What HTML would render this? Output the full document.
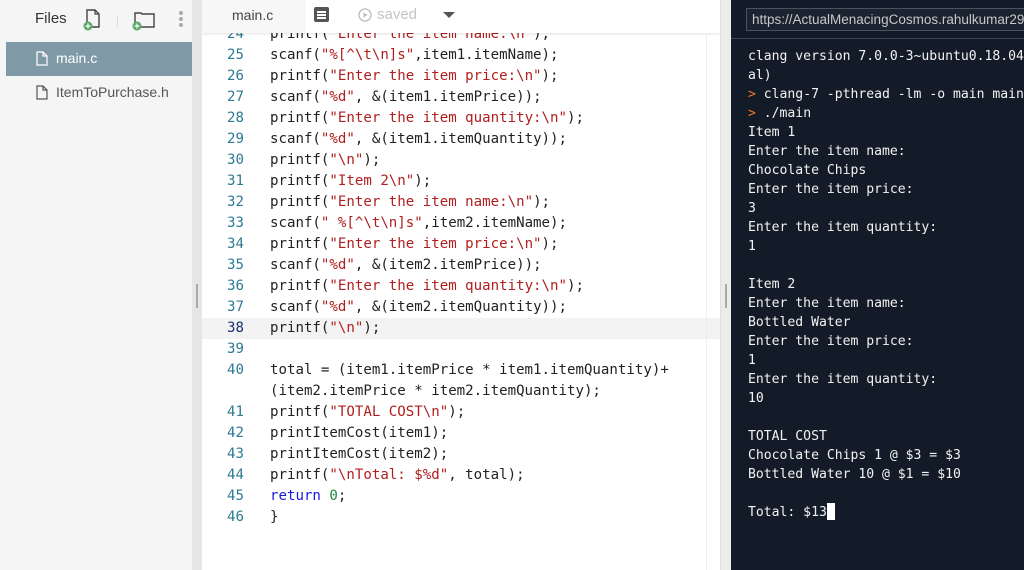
<!DOCTYPE html>
<html><head><style>
*{margin:0;padding:0;box-sizing:border-box}
body{width:1024px;height:570px;overflow:hidden;position:relative;background:#fff;font-family:"Liberation Sans",sans-serif}
#side{position:absolute;left:0;top:0;width:192px;height:570px;background:#f5f5f5}
#gut{position:absolute;left:192px;top:0;width:10px;height:570px;background:#e6e6e6}
#ed{position:absolute;left:202px;top:0;width:518px;height:570px;background:#fff;overflow:hidden}
#div{position:absolute;left:720px;top:0;width:11px;height:570px;background:#ececec;border-left:1px solid #e0e0e0}
#term{position:absolute;left:731px;top:0;width:293px;height:570px;background:#141b28;overflow:hidden}
.code{position:absolute;left:0;top:24px;width:518px;font-family:"DejaVu Sans Mono",monospace;font-size:14.1px;line-height:21px;color:#222;white-space:pre}
.ln{display:inline-block;width:42px;text-align:right;color:#2d7a94;margin-right:26px}
.s{color:#b01e1e}.k{color:#1a1adb}.n{color:#1a8a3a}
.act{background:#f3f3f3}
.act .ln{color:#1c2f73}
#hdr{position:absolute;left:0;top:0;width:518px;height:33px;background:#fff;box-shadow:0 1px 3px rgba(0,0,0,.12)}
.tcode{position:absolute;left:17px;top:46.5px;font-family:"DejaVu Sans Mono",monospace;font-size:13.1px;line-height:19px;color:#f2f2f2;white-space:pre}
.ar{color:#f0792a}
</style></head><body>
<div id="side">
 <div style="position:absolute;left:35px;top:10px;font-size:15px;color:#333">Files</div>
 <svg style="position:absolute;left:82px;top:8px" width="22" height="24"><path d="M5 2h8l4 4v13H5z" fill="none" stroke="#444" stroke-width="1.4"/><path d="M13 2v4h4" fill="none" stroke="#444" stroke-width="1.2"/><circle cx="6" cy="18" r="4.5" fill="#5aa86a"/><path d="M6 15.5v5M3.5 18h5" stroke="#fff" stroke-width="1.2"/></svg>
 <div style="position:absolute;left:117px;top:15px;width:1px;height:12px;background:#ddd"></div>
 <svg style="position:absolute;left:130px;top:8px" width="28" height="24"><path d="M5 5h6l1 1h12v13H5z" fill="none" stroke="#444" stroke-width="1.4"/><circle cx="7" cy="18" r="4.5" fill="#5aa86a"/><path d="M7 15.5v5M4.5 18h5" stroke="#fff" stroke-width="1.2"/></svg>
 <div style="position:absolute;left:179px;top:11px;width:4px;height:4px;border-radius:2px;background:#aaa;box-shadow:0 6px 0 #aaa,0 12px 0 #aaa"></div>
 <div style="position:absolute;left:6px;top:42px;width:186px;height:34px;background:#7f99a6"></div>
 <svg style="position:absolute;left:36px;top:51px" width="12" height="15"><path d="M1 1h6l4 4v9H1z M7 1v4h4" fill="none" stroke="#fff" stroke-width="1.2"/></svg>
 <div style="position:absolute;left:56px;top:50px;font-size:14px;color:#fff">main.c</div>
 <svg style="position:absolute;left:36px;top:85px" width="12" height="15"><path d="M1 1h6l4 4v9H1z M7 1v4h4" fill="none" stroke="#555" stroke-width="1.2"/></svg>
 <div style="position:absolute;left:56px;top:84px;font-size:14px;color:#555">ItemToPurchase.h</div>
</div>
<div id="gut"><div style="position:absolute;left:4px;top:284px;width:2px;height:24px;background:#aaa"></div></div>
<div id="ed">
<div class="code"><div><span class="ln">24</span>printf(<span class="s">"Enter the item name:\n"</span>);</div><div><span class="ln">25</span>scanf(<span class="s">"%[^\t\n]s"</span>,item1.itemName);</div><div><span class="ln">26</span>printf(<span class="s">"Enter the item price:\n"</span>);</div><div><span class="ln">27</span>scanf(<span class="s">"%d"</span>, &amp;(item1.itemPrice));</div><div><span class="ln">28</span>printf(<span class="s">"Enter the item quantity:\n"</span>);</div><div><span class="ln">29</span>scanf(<span class="s">"%d"</span>, &amp;(item1.itemQuantity));</div><div><span class="ln">30</span>printf(<span class="s">"\n"</span>);</div><div><span class="ln">31</span>printf(<span class="s">"Item 2\n"</span>);</div><div><span class="ln">32</span>printf(<span class="s">"Enter the item name:\n"</span>);</div><div><span class="ln">33</span>scanf(<span class="s">" %[^\t\n]s"</span>,item2.itemName);</div><div><span class="ln">34</span>printf(<span class="s">"Enter the item price:\n"</span>);</div><div><span class="ln">35</span>scanf(<span class="s">"%d"</span>, &amp;(item2.itemPrice));</div><div><span class="ln">36</span>printf(<span class="s">"Enter the item quantity:\n"</span>);</div><div><span class="ln">37</span>scanf(<span class="s">"%d"</span>, &amp;(item2.itemQuantity));</div><div class="act"><span class="ln">38</span>printf(<span class="s">"\n"</span>);</div><div><span class="ln">39</span></div><div><span class="ln">40</span>total = (item1.itemPrice * item1.itemQuantity)+</div><div><span class="ln"></span>(item2.itemPrice * item2.itemQuantity);</div><div><span class="ln">41</span>printf(<span class="s">"TOTAL COST\n"</span>);</div><div><span class="ln">42</span>printItemCost(item1);</div><div><span class="ln">43</span>printItemCost(item2);</div><div><span class="ln">44</span>printf(<span class="s">"\nTotal: $%d"</span>, total);</div><div><span class="ln">45</span><span class="k">return</span> <span class="n">0</span>;</div><div><span class="ln">46</span>}</div></div>
<div id="hdr">
 <div style="position:absolute;left:0;top:0;width:104px;height:33px;background:#f7f7f7"></div>
 <div style="position:absolute;left:30px;top:7px;font-size:14px;color:#444">main.c</div>
 <div style="position:absolute;left:112px;top:7px;width:15px;height:15px;border-radius:2px;background:#555"><div style="margin:4px 3px;height:1.5px;background:#fff;box-shadow:0 3px 0 #fff,0 6px 0 #fff;width:9px"></div></div>
 <svg style="position:absolute;left:155px;top:7px" width="16" height="16"><circle cx="8" cy="8" r="6" fill="none" stroke="#bbb" stroke-width="1.3"/><path d="M6.5 5.5l4 2.5-4 2.5z" fill="#bbb"/></svg>
 <div style="position:absolute;left:175px;top:6px;font-size:15px;color:#c4c4c4">saved</div>
 <svg style="position:absolute;left:240px;top:10px" width="14" height="10"><path d="M1 2h12l-6 6z" fill="#555"/></svg>
</div>
<div style="position:absolute;left:504px;top:33px;width:1px;height:537px;background:#eee"></div>
</div>
<div id="div"><div style="position:absolute;left:4px;top:284px;width:2px;height:24px;background:#aaa"></div></div>
<div id="term">
 <div style="position:absolute;left:15px;top:8px;width:300px;height:23px;border:1px solid #4a5160;background:#1b2230;color:#c8c8c8;font-size:13.5px;padding:3px 5px;white-space:nowrap">https://ActualMenacingCosmos.rahulkumar29</div>
 <div style="position:absolute;left:0;top:38px;width:293px;height:1px;background:#3a4150"></div>
<div class="tcode">clang version 7.0.0-3~ubuntu0.18.04
al)
<span class="ar">&gt;</span> clang-7 -pthread -lm -o main main
<span class="ar">&gt;</span> ./main
Item 1
Enter the item name:
Chocolate Chips
Enter the item price:
3
Enter the item quantity:
1

Item 2
Enter the item name:
Bottled Water
Enter the item price:
1
Enter the item quantity:
10

TOTAL COST
Chocolate Chips 1 @ $3 = $3
Bottled Water 10 @ $1 = $10

Total: $13<span style="display:inline-block;width:8px;height:17px;background:#fff;vertical-align:-4px"></span></div>
</div>
</body></html>
